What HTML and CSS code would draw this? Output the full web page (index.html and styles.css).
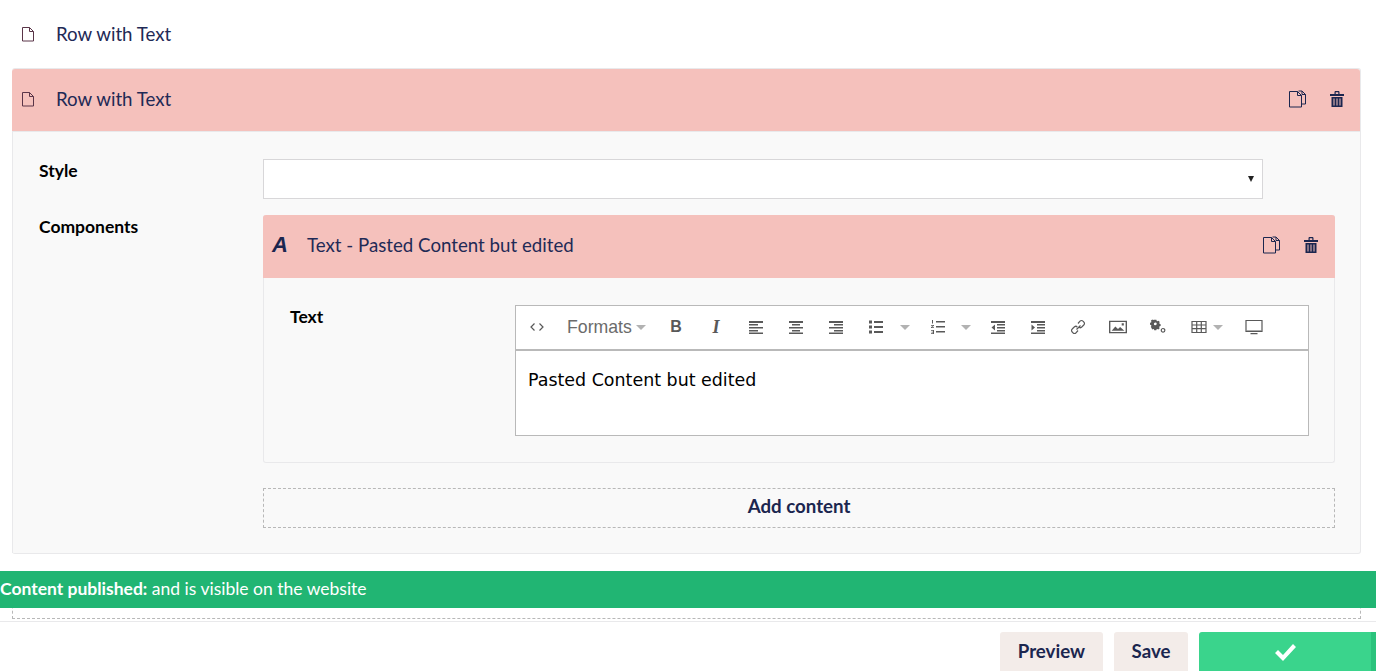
FILE: index.html
```html
<!DOCTYPE html>
<html lang="en">
<head>
<meta charset="utf-8">
<title>Row with Text</title>
<link rel="stylesheet" href="styles.css">
</head>
<body>
<div class="app">
  <main class="main">
    <div class="row-head">
      <svg class="doc-icon" viewBox="0 0 12 16"><path d="M.5 1.500h7l4 4v9.500h-11zM7.500 1.500v4h4"/></svg>
      <span class="row-title">Row with Text</span>
    </div>
    <section class="block">
      <header class="block-head">
        <svg class="doc-icon" viewBox="0 0 12 16"><path d="M.5 1.500h7l4 4v9.500h-11zM7.500 1.500v4h4"/></svg>
        <span class="row-title">Row with Text</span>
        <div class="actions">
          <svg class="act-copy" viewBox="0 0 18 18"><path d="M.5 1.500h8l4 4v11.500h-12zM8.500 1.500v4h4M9.500 1h3.500v3.500h3.500M13 1l3.500 3.500v9.500h-4"/></svg>
          <svg class="act-trash" viewBox="0 0 14 16"><path class="solid" d="M0 3h14v2H0zM4.500 3V1.200C4.500.5 5 0 5.700 0h2.600c.7 0 1.200.5 1.200 1.200V3H8.300V1.200H5.700V3zM1.500 6h11v10h-11zM3.500 7.500v7h1v-7zM6.500 7.500v7h1v-7zM9.500 7.500v7h1v-7z"/></svg>
        </div>
      </header>
      <div class="block-body">
        <div class="field field-style">
          <label class="field-label">Style</label>
          <div class="select-wrap"><select class="select"><option></option></select></div>
        </div>
        <div class="field">
          <div class="field-label">Components</div>
          <div class="field-main">
            <div class="panel">
              <header class="panel-head">
                <span class="a-icon">A</span>
                <span class="row-title">Text - Pasted Content but edited</span>
                <div class="actions">
                  <svg class="act-copy" viewBox="0 0 18 18"><path d="M.5 1.500h8l4 4v11.500h-12zM8.500 1.500v4h4M9.500 1h3.500v3.500h3.500M13 1l3.500 3.500v9.500h-4"/></svg>
                  <svg class="act-trash" viewBox="0 0 14 16"><path class="solid" d="M0 3h14v2H0zM4.500 3V1.200C4.500.5 5 0 5.700 0h2.600c.7 0 1.200.5 1.200 1.200V3H8.300V1.200H5.700V3zM1.500 6h11v10h-11zM3.500 7.500v7h1v-7zM6.500 7.500v7h1v-7zM9.500 7.500v7h1v-7z"/></svg>
                </div>
              </header>
              <div class="panel-body">
                <div class="panel-label">Text</div>
                <div class="editor">
                  <div class="toolbar">
                    <span class="tool"><svg class="ti" viewBox="0 0 16 16"><path class="line" d="M5.500 4.500 2 8l3.500 3.500M10.500 4.500 14 8l-3.500 3.500"/></svg></span>
                    <span class="tool tool-formats"><span class="formats">Formats</span><i class="caret"></i></span>
                    <span class="tool"><span class="glyph-b">B</span></span>
                    <span class="tool"><span class="glyph-i">I</span></span>
                    <span class="tool"><svg class="ti" viewBox="0 0 16 16"><path class="solid" d="M1 2h14v2H1zM1 5h9v1.500H1zM1 8h14v1.500H1zM1 11h9v1.500H1zM1 13.500h14V15H1z"/></svg></span>
                    <span class="tool"><svg class="ti" viewBox="0 0 16 16"><path class="solid" d="M1 2h14v2H1zM4 5h8v1.500H4zM1 8h14v1.500H1zM4 11h8v1.500H4zM1 13.500h14V15H1z"/></svg></span>
                    <span class="tool"><svg class="ti" viewBox="0 0 16 16"><path class="solid" d="M1 2h14v2H1zM6 5h9v1.500H6zM1 8h14v1.500H1zM6 11h9v1.500H6zM1 13.500h14V15H1z"/></svg></span>
                    <span class="tool tool-bul"><svg class="ti" viewBox="0 0 16 16"><path class="solid" d="M1 1.500h3v3H1zM1 6.500h3v3H1zM1 11.500h3v3H1zM6 2h9v2H6zM6 7h9v2H6zM6 12h9v2H6z"/></svg><i class="caret caret-bul"></i></span>
                    <span class="tool tool-num"><svg class="ti" viewBox="0 0 16 16"><path class="solid" d="M6 2h9v1.500H6zM6 7h9v1.500H6zM6 12h9v1.500H6zM2 1h1v3.500H2zM1 6h3v.8L2 8.200h2V9H1v-.8L3 6.800H1zM1 11h3v4H1v-.8h2v-.8H1.500v-.7H3v-.9H1z"/></svg><i class="caret caret-num"></i></span>
                    <span class="tool"><svg class="ti" viewBox="0 0 16 16"><path class="solid" d="M1 2h14v2H1zM7 5h8v1.500H7zM7 8h8v1.500H7zM7 11h8v1.500H7zM1 13.500h14V15H1zM5 5.500v6L1.500 8.500z"/></svg></span>
                    <span class="tool"><svg class="ti" viewBox="0 0 16 16"><path class="solid" d="M1 2h14v2H1zM7 5h8v1.500H7zM7 8h8v1.500H7zM7 11h8v1.500H7zM1 13.500h14V15H1zM1.500 5.500v6L5 8.500z"/></svg></span>
                    <span class="tool"><svg class="ti" viewBox="0 0 16 16"><path class="line" d="M6.500 10.500l4-4M8 4.500l2-2.300a2 2 0 0 1 3 0l.8.800a2 2 0 0 1 0 3l-2.300 2.200a2 2 0 0 1-2.800-.3M8 11.500l-2 2.300a2 2 0 0 1-3 0l-.8-.8a2 2 0 0 1 0-3l2.300-2.200a2 2 0 0 1 2.800.3"/></svg></span>
                    <span class="tool"><svg class="ti ti-wide" viewBox="0 0 17 14"><path class="solid" fill-rule="evenodd" d="M0 1h17v12H0zM1.300 2.300v9.400h14.400V2.300zM2.500 10.500 6 6.500l2.500 2.500 2-2 4 3.500zM12 3.500h2v2h-2z"/></svg></span>
                    <span class="tool"><svg class="ti" viewBox="0 0 16 16"><path class="solid" fill-rule="evenodd" d="M5 2.500h2.500l.3 1.300 1 .5 1.200-.6 1.500 1.600-.7 1.100.5 1 1.200.4v2.300l-1.200.3-.5 1 .6 1.200-1.600 1.500-1.100-.7-1 .5-.3 1.100H5l-.3-1.200-1-.4-1.100.6L1 10.900l.7-1-.5-1.100L0 8.500V6.200l1.200-.3.500-1L1 3.800l1.600-1.500 1.100.6 1-.4zM6.200 5.800a1.700 1.700 0 1 0 .1 3.400 1.700 1.700 0 0 0-.1-3.400z" transform="translate(0 -1.500) scale(.85)"/><path class="line" d="M13 9.500a1.800 1.800 0 1 0 .1 3.600 1.800 1.800 0 0 0-.1-3.600z"/></svg></span>
                    <span class="tool tool-table"><svg class="ti" viewBox="0 0 16 16"><path class="line" d="M1 2.500h14v11H1zM1 6h14M1 9.700h14M5.700 2.500v11M10.300 2.500v11"/></svg><i class="caret caret-table"></i></span>
                    <span class="tool"><svg class="ti ti-wide" viewBox="0 0 17 16"><path class="line" d="M.5 1.500h16v11H.5z"/><path class="solid" d="M5 14h7v1.300H5zM1 11.500h15v1.500H1z"/></svg></span>
                  </div>
                  <div class="editor-body">Pasted Content but edited</div>
                </div>
              </div>
            </div>
            <button class="add-btn" type="button">Add content</button>
          </div>
        </div>
      </div>
    </section>
    <div class="dashed-foot"></div>
  </main>
  <footer class="footer">
    <button class="btn" type="button">Preview</button>
    <button class="btn btn-save" type="button">Save</button>
    <div class="publish">
      <span class="publish-main"><svg class="check" viewBox="0 0 24 20"><path d="M2 11l3-3 5 5L20 2l3 3L10 19z"/></svg></span>
      <span class="publish-side"></span>
    </div>
  </footer>
  <div class="notice"><strong class="notice-strong">Content published:</strong> and is visible on the website</div>
</div>
</body>
</html>
```

FILE: styles.css
```css
* { box-sizing: border-box; }
html, body { margin: 0; padding: 0; height: 100%; overflow: hidden; background: #fff; }
body { font-family: Lato, "Liberation Sans", sans-serif; color: #1b264f; }

.app { position: relative; display: flex; flex-direction: column; height: 671px; overflow: hidden; }
.main { flex: 1 1 0; min-height: 0; overflow: hidden; padding: 0 15px 0 12px; }

.row-head { display: flex; align-items: center; height: 68px; padding-left: 10px; }
.row-title { font-size: 18.700px; line-height: 24px; color: #1f2a56; }
.doc-icon { width: 12px; height: 16px; margin-right: 22px; flex: none; }
.doc-icon path { fill: none; stroke: #5a3548; stroke-width: 1; }

.block { border: 1px solid #e9e9eb; border-radius: 3px; background: #f9f9f9; border-left-width: 0; border-right-width: 1px; }
.block-head { display: flex; align-items: center; height: 62px; padding: 0 0 2px 10px; background: #f5c1bc; border-radius: 3px 3px 0 0; }
.block-body { padding: 27px 25px 25px 26px; border-left: 1px solid #e9e9eb; border-top: 1px solid #e9e9eb; }

.actions { display: flex; align-items: center; margin-left: auto; gap: 23px; padding-right: 16px; }
.act-copy { width: 18px; height: 18px; }
.act-copy path { fill: none; stroke: #1b264f; stroke-width: 1; }
.act-trash { width: 14px; height: 16px; }
.solid { fill: #1b264f; }

.field { display: flex; }
.field-style { margin-bottom: 16px; }
.field-label { width: 224px; flex: none; font-size: 17.500px; font-weight: 700; line-height: 24px; color: #000; }
.field-main { flex: 1 1 0; min-width: 0; }

.select-wrap { position: relative; width: 1000px; height: 40px; }
.select { width: 100%; height: 40px; appearance: none; background: #fff; border: 1px solid #d8d7d9; border-radius: 0; display: block; }
.select-wrap::after { content: ""; position: absolute; right: 9px; top: 17px; border: 3.500px solid transparent; border-top: 6px solid #222; border-bottom: 0; }

.panel { border: 1px solid #e9e9eb; border-top: 0; border-radius: 3px; }
.panel-head { display: flex; align-items: center; height: 63px; margin: 0 -1px; padding: 0 0 4px 9px; background: #f5c1bc; border-radius: 3px 3px 0 0; }
.a-icon { width: 35px; flex: none; font-family: "Liberation Sans", sans-serif; font-style: italic; font-weight: 700; font-size: 22px; line-height: 24px; color: #1b264f; }
.panel-head .actions { padding-right: 17px; }

.panel-body { display: flex; padding: 27px 25px 26px 26px; }
.panel-label { width: 225px; flex: none; font-size: 17.500px; font-weight: 700; line-height: 24px; color: #000; }

.editor { flex: 1 1 0; min-width: 0; background: #fff; border: 1px solid #b9b9b9; }
.toolbar { display: flex; height: 45px; padding: 0 0 1px 1px; align-items: center; border-bottom: 2px solid #b9b9b9; }
.tool { display: flex; align-items: center; justify-content: center; width: 40px; height: 100%; flex: none; position: relative; color: #595959; }
.tool .solid { fill: #595959; }
.ti { width: 16px; height: 16px; display: block; flex: none; }
.ti-wide { width: 18px; height: 16px; }
.line { fill: none; stroke: #595959; stroke-width: 1.200; }
.tool-formats { width: 99px; justify-content: flex-start; padding-left: 10px; }
.formats { font-family: "Liberation Sans", sans-serif; font-size: 17.700px; line-height: 20px; color: #6b6b6b; }
.caret { display: block; width: 0; height: 0; flex: none; border: 5px solid transparent; border-top: 5px solid #b2b2b2; border-bottom: 0; margin-left: 4px; }
.glyph-b { font-family: "Liberation Sans", sans-serif; font-weight: 700; font-size: 16px; color: #595959; }
.glyph-i { font-family: "Liberation Serif", serif; font-style: italic; font-weight: 700; font-size: 18px; color: #595959; }
.tool-bul { width: 62px; justify-content: flex-start; padding-left: 12px; }
.tool-num { width: 60px; justify-content: flex-start; padding-left: 12px; }
.tool-table { width: 56px; justify-content: flex-start; padding-left: 13px; }
.caret-bul { margin-left: 16px; }
.caret-num { margin-left: 15px; }
.caret-table { margin-left: 6px; }

.editor-body { height: 84px; padding: 19px 12px; font-family: "DejaVu Sans", sans-serif; font-size: 17.450px; line-height: 20px; color: #000; }

.add-btn { display: block; width: 100%; height: 40px; margin-top: 25px; background: transparent; border: 1px dashed #b8b8b8; font-family: Lato, sans-serif; font-size: 18.700px; font-weight: 700; color: #1b264f; padding: 0 0 4px; }

.dashed-foot { height: 40px; margin-top: 25px; border: 1px dashed #b8b8b8; }

.footer { flex: none; display: flex; align-items: flex-start; justify-content: flex-end; gap: 11px; height: 50px; border-top: 1px solid #e9e9eb; padding-top: 10px; overflow: hidden; }
.btn { height: 46px; padding: 0 18px; flex: none; border: 0; border-radius: 3px; background: #f3ece9; font-family: Lato, sans-serif; font-size: 18.700px; font-weight: 700; line-height: 38px; color: #1b264f; display: flex; align-items: flex-start; }
.btn-save { padding: 0 17.500px; }
.publish { display: flex; width: 177px; height: 46px; flex: none; border-radius: 3px 0 0 3px; overflow: hidden; }
.publish-main { flex: 1; background: #3ad48c; display: flex; justify-content: center; padding-top: 10px; }
.publish-side { width: 5px; background: #2bc37c; }
.check { width: 24px; height: 20px; }
.check path { fill: #fff; }

.notice { position: absolute; left: 0; right: 0; top: 571px; height: 37px; background: #21b573; color: #fff; font-size: 17.500px; line-height: 36px; }
.notice-strong { font-weight: 700; }
```
